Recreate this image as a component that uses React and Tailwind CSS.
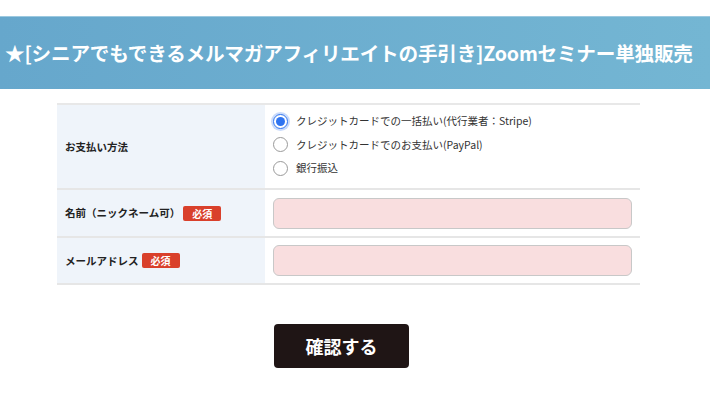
import React from "react";

const font = { fontFamily: '"Noto Sans CJK JP", "Noto Sans", sans-serif' };

function Radio({ checked, label }) {
  return (
    <div className="flex items-center h-[23.5px]">
      {checked ? (
        <div className="w-[15px] h-[15px] rounded-full border-[1.5px] border-[#2f74f0] bg-white flex items-center justify-center shadow-[0_0_0_2px_#c9dbfb]">
          <div className="w-[9px] h-[9px] rounded-full bg-[#2f74f0]" />
        </div>
      ) : (
        <div className="w-[15px] h-[15px] rounded-full border-[1.5px] border-[#9a9a9a] bg-white" />
      )}
      <span className="ml-[8px] text-[10.5px] text-[#333]">{label}</span>
    </div>
  );
}

function Badge() {
  return (
    <span className="inline-flex items-center justify-center w-[38px] h-[15px] rounded-[2px] bg-[#d9402b] text-white text-[10px] font-bold">
      必須
    </span>
  );
}

export default function App() {
  return (
    <div className="w-[710px] h-[397px] bg-white overflow-hidden" style={font}>
      <div className="mt-[16px] h-[73px] border-t border-[#9cc9e0] bg-gradient-to-r from-[#66a7cc] to-[#74b6d3] flex items-center pl-[5px]">
        <h1 className="text-white font-bold text-[19.6px] tracking-[-0.2px] whitespace-nowrap">
          ★[シニアでもできるメルマガアフィリエイトの手引き]Zoomセミナー単独販売
        </h1>
      </div>

      <div className="ml-[57px] w-[583px] mt-[14px] border-t-2 border-[#e8e8e8]">
        <div className="flex h-[85px] border-b-2 border-[#e6e6e6]">
          <div className="w-[208px] bg-[#eff4fa] flex items-center pl-[8px] text-[10.5px] font-bold text-[#222]">
            お支払い方法
          </div>
          <div className="flex-1 flex flex-col justify-center pl-[8px] pb-[4px]">
            <Radio checked label="クレジットカードでの一括払い(代行業者：Stripe)" />
            <Radio label="クレジットカードでのお支払い(PayPal)" />
            <Radio label="銀行振込" />
          </div>
        </div>
        <div className="flex h-[48px] border-b-2 border-[#e6e6e6]">
          <div className="w-[208px] bg-[#eff4fa] flex items-center pl-[8px] text-[10.5px] font-bold text-[#222]">
            <span className="mr-[3px]">名前（ニックネーム可）</span>
            <Badge />
          </div>
          <div className="flex-1 flex items-center pl-[8px] pr-[8px]">
            <div className="w-full h-[31px] rounded-[6px] border border-[#c8c8c8] bg-[#f9dedf]" />
          </div>
        </div>
        <div className="flex h-[47px] border-b-2 border-[#e6e6e6]">
          <div className="w-[208px] bg-[#eff4fa] flex items-center pl-[8px] text-[10.5px] font-bold text-[#222]">
            <span className="mr-[3px]">メールアドレス</span>
            <Badge />
          </div>
          <div className="flex-1 flex items-center pl-[8px] pr-[8px]">
            <div className="w-full h-[31px] rounded-[6px] border border-[#c8c8c8] bg-[#f9dedf]" />
          </div>
        </div>
      </div>

      <div className="mt-[39px] ml-[274px]">
        <button className="w-[135px] h-[44px] rounded-[4px] bg-[#1f1515] text-white font-bold text-[18px] flex items-center justify-center">
          確認する
        </button>
      </div>
    </div>
  );
}
